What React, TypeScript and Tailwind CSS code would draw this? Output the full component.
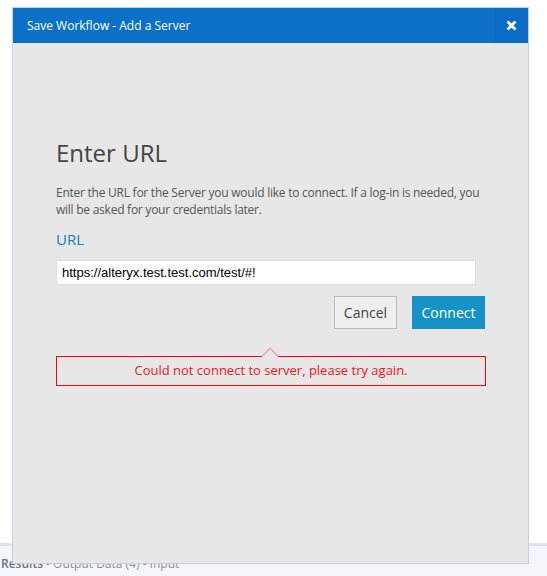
import React, { useState } from "react";

// Server connection dialog shown over the workflow canvas
export default function App() {
  const [url, setUrl] = useState("https://alteryx.test.test.com/test/#!");

  return (
    <div
      className="relative w-[547px] h-[576px] bg-white overflow-hidden"
      style={{ fontFamily: '"Open Sans", "Noto Sans", sans-serif' }}
    >
      {/* results panel behind the dialog */}
      <div className="absolute left-0 right-0 top-[543px] bottom-0 bg-[#f3f7fc] border-t-[3px] border-[#dce3ee]">
        <div className="pt-[9px] pl-[1px] text-[12px] text-[#8a8f99] whitespace-nowrap">
          <span className="font-semibold text-[#6b7280]">Results</span> - Output Data (4) - Input
        </div>
      </div>

      {/* dialog */}
      <div className="absolute left-[12px] top-[7px] w-[517px] h-[557px] bg-[#e7e7e7] border border-[#c6cfdc] flex flex-col">
        <div className="h-[35px] bg-[#0b71c7] flex items-center justify-between shrink-0">
          <span className="pl-[14px] text-[12px] text-white">Save Workflow - Add a Server</span>
          <button className="w-[34px] h-[35px] bg-[#0b6cc6] flex items-center justify-center text-white">
            <svg width="11" height="11" viewBox="0 0 11 11">
              <path d="M1.5 1.5 L9.5 9.5 M9.5 1.5 L1.5 9.5" stroke="white" strokeWidth="2.8" />
            </svg>
          </button>
        </div>

        <div className="pl-[43px] pr-[43px] pt-[94px]">
          <h1 className="text-[24px] leading-[32px] text-[#444]">Enter URL</h1>
          <p className="mt-[15px] text-[12px] leading-[17px] tracking-[-0.25px] text-[#555]">
            Enter the URL for the Server you would like to connect. If a log-in is needed, you will be asked for your credentials later.
          </p>
          <label className="block mt-[11px] text-[15px] leading-[20px] text-[#1b7fa7]">URL</label>
          <input
            value={url}
            onChange={(e) => setUrl(e.target.value)}
            className="mt-[11px] w-[420px] h-[25px] bg-white border border-[#dcdcdc] px-[5px] text-[13px] text-black outline-none"
            style={{ fontFamily: '"Liberation Sans", Arial, sans-serif' }}
          />
          <div className="mt-[11px] flex justify-end gap-[15px]">
            <button className="w-[63px] h-[33px] bg-[#efefef] border border-[#bbbbbb] text-[14px] text-[#444]">
              Cancel
            </button>
            <button className="w-[73px] h-[33px] bg-[#1592c6] text-[14px] text-white">
              Connect
            </button>
          </div>

          <div className="relative mt-[27px] w-[430px] h-[30px] border border-[#ff0000] flex items-center justify-center">
            <span className="absolute -top-[7px] left-[207px] w-[12px] h-[12px] rotate-45 bg-[#e7e7e7] border-l border-t border-[#f08a8a]" />
            <span className="relative text-[13px] text-[#f0141e]">Could not connect to server, please try again.</span>
          </div>
        </div>
      </div>
    </div>
  );
}
